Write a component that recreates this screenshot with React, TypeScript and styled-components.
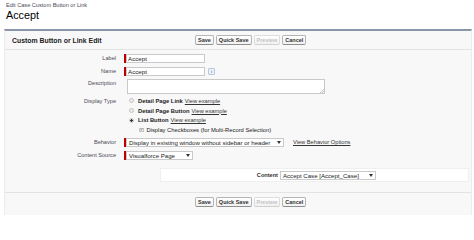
import React from 'react'
import styled, { createGlobalStyle } from 'styled-components'

const GlobalStyle = createGlobalStyle`
  html, body {
    margin: 0;
    padding: 0;
    background: #ffffff;
  }
  body {
    font-family: "Liberation Sans", Arial, sans-serif;
    color: #333333;
  }
`

const Page = styled.div`
  width: 474px;
  height: 215px;
  padding: 2px 2px 0 4px;
  box-sizing: border-box;
  overflow: hidden;
`

const Breadcrumb = styled.div`
  margin-left: 2px;
  font-size: 5.6px;
  line-height: 7px;
  color: #4a4a56;
`

const Title = styled.h1`
  margin: 0 0 0 2px;
  font-size: 10.8px;
  line-height: 13px;
  font-weight: normal;
  color: #000000;
`

const Panel = styled.div`
  margin-top: 7px;
  width: 468px;
  background: #f8f8f8;
  border-top: 2px solid #8c96aa;
  border-left: 1px solid #ececec;
  border-right: 1px solid #ececec;
  border-bottom: 1px solid #ececec;
  box-sizing: border-box;
  padding-bottom: 4px;
`

const ButtonRow = styled.div<{ $top?: boolean }>`
  display: flex;
  align-items: center;
  height: 18px;
  padding-left: 7px;
  border-${({ $top }) => ($top ? 'bottom' : 'top')}: 1px solid #e3e3e3;
`

const PanelTitle = styled.h2`
  margin: 0;
  width: 183px;
  font-size: 6.9px;
  font-weight: bold;
  color: #222222;
`

const ButtonBar = styled.div`
  display: flex;
  gap: 2px;
`

const Btn = styled.button<{ $disabled?: boolean }>`
  height: 10px;
  padding: 0 2px;
  margin: 0;
  font-family: "Liberation Sans", Arial, sans-serif;
  font-size: 5.5px;
  line-height: 8px;
  font-weight: bold;
  color: ${({ $disabled }) => ($disabled ? '#c4c4c4' : '#333333')};
  background: linear-gradient(#ffffff, #f1f1f1);
  border: 1px solid ${({ $disabled }) => ($disabled ? '#dcdcdc' : '#b5b5b5')};
  border-bottom-color: ${({ $disabled }) => ($disabled ? '#d0d0d0' : '#8f8f8f')};
  border-radius: 2px;
`

const Form = styled.div`
  display: grid;
  grid-template-columns: 113px 1fr;
  column-gap: 6px;
  padding-top: 4px;
`

const Label = styled.div<{ $top?: number }>`
  text-align: right;
  padding-right: 2px;
  padding-top: ${({ $top }) => $top ?? 0}px;
  font-size: 5.6px;
  line-height: 9px;
  color: #4a4a56;
`

const Field = styled.div<{ $gap?: number }>`
  display: flex;
  align-items: center;
  margin-bottom: ${({ $gap }) => $gap ?? 4}px;
`

const Required = styled.span`
  width: 2px;
  align-self: stretch;
  background: #c00000;
`

const TextInput = styled.div<{ $w: number }>`
  width: ${({ $w }) => $w}px;
  height: 9px;
  box-sizing: border-box;
  border: 1px solid #c9c9c9;
  background: #ffffff;
  padding-left: 1px;
  font-size: 6.2px;
  line-height: 7px;
  color: #222222;
`

const InfoIcon = styled.span`
  margin-left: 3px;
  width: 5px;
  height: 5px;
  border: 1px solid #b8c8dc;
  border-radius: 1px;
  background: #eef3fa;
  color: #5b7fb0;
  font-size: 4px;
  line-height: 5px;
  text-align: center;
  font-weight: bold;
`

const TextArea = styled.div`
  position: relative;
  margin-left: 3px;
  width: 198px;
  height: 15px;
  box-sizing: border-box;
  border: 1px solid #c9c9c9;
  background: #ffffff;
`

const Grip = styled.svg`
  position: absolute;
  right: 0;
  bottom: 0;
`

const Options = styled.div`
  display: flex;
  flex-direction: column;
  padding-left: 5px;
  margin-bottom: 3px;
`

const Option = styled.div<{ $indent?: number }>`
  display: flex;
  align-items: center;
  height: 9.7px;
  padding-left: ${({ $indent }) => $indent ?? 0}px;
  font-size: 5.8px;
  color: #222222;
`

const Radio = styled.span<{ $on?: boolean }>`
  width: 5px;
  height: 5px;
  box-sizing: border-box;
  border-radius: 50%;
  border: 1px solid #c3c3c3;
  background: ${({ $on }) => ($on ? 'radial-gradient(circle, #333 0 1px, #f2f2f2 1.3px)' : '#ececec')};
  margin-right: 4px;
`

const Check = styled.span`
  display: flex;
  align-items: center;
  justify-content: center;
  width: 4.5px;
  height: 4.5px;
  box-sizing: border-box;
  border: 1px solid #c3c3c3;
  background: #f4f4f4;
  margin-right: 3px;
`

const OptName = styled.b`
  margin-right: 2px;
`

const Link = styled.a`
  color: #333333;
  text-decoration: underline;
  font-size: 5.7px;
  font-weight: normal;
`

const Select = styled.div<{ $w: number }>`
  display: flex;
  align-items: center;
  justify-content: space-between;
  width: ${({ $w }) => $w}px;
  height: 9px;
  box-sizing: border-box;
  border: 1px solid #c9c9c9;
  background: #ffffff;
  padding: 0 2px 0 2px;
  font-size: 6.1px;
  line-height: 7px;
  color: #222222;
  white-space: nowrap;
`

const SideLink = styled(Link)`
  margin-left: 9px;
`

const ContentBox = styled.div`
  display: grid;
  grid-template-columns: 117px auto;
  column-gap: 2px;
  align-items: center;
  margin: 8px 2px 10px 155px;
  height: 14px;
  padding-top: 1px;
  box-sizing: border-box;
  background: #ffffff;
  border: 1px solid #efefef;
`

const ContentLabel = styled.div`
  text-align: right;
  font-size: 5.6px;
  font-weight: bold;
  color: #333333;
`

const Arrow = () => (
  <svg width="4" height="3" viewBox="0 0 4 3">
    <path d="M0 0 L4 0 L2 3 Z" fill="#333" />
  </svg>
)

const Buttons = () => (
  <ButtonBar>
    <Btn>Save</Btn>
    <Btn>Quick Save</Btn>
    <Btn $disabled>Preview</Btn>
    <Btn>Cancel</Btn>
  </ButtonBar>
)

export default function App() {
  return (
    <Page>
      <GlobalStyle />
      <Breadcrumb>Edit Case Custom Button or Link</Breadcrumb>
      <Title>Accept</Title>
      <Panel>
        <ButtonRow $top>
          <PanelTitle>Custom Button or Link Edit</PanelTitle>
          <Buttons />
        </ButtonRow>

        <Form>
          <Label>Label</Label>
          <Field>
            <Required />
            <TextInput $w={79}>Accept</TextInput>
          </Field>

          <Label>Name</Label>
          <Field $gap={3}>
            <Required />
            <TextInput $w={79}>Accept</TextInput>
            <InfoIcon>i</InfoIcon>
          </Field>

          <Label>Description</Label>
          <Field $gap={2}>
            <TextArea>
              <Grip width="4" height="4" viewBox="0 0 4 4">
                <path d="M0 4 L4 0 M2 4 L4 2" stroke="#999" strokeWidth="0.6" />
              </Grip>
            </TextArea>
          </Field>

          <Label $top={1}>Display Type</Label>
          <Options>
            <Option>
              <Radio />
              <OptName>Detail Page Link</OptName>
              <Link>View example</Link>
            </Option>
            <Option>
              <Radio />
              <OptName>Detail Page Button</OptName>
              <Link>View example</Link>
            </Option>
            <Option>
              <Radio $on />
              <OptName>List Button</OptName>
              <Link>View example</Link>
            </Option>
            <Option $indent={10}>
              <Check>
                <svg width="3" height="3" viewBox="0 0 3 3">
                  <path d="M0.3 1.6 L1.2 2.5 L2.8 0.4" stroke="#333" strokeWidth="0.6" fill="none" />
                </svg>
              </Check>
              Display Checkboxes (for Multi-Record Selection)
            </Option>
          </Options>

          <Label>Behavior</Label>
          <Field>
            <Required />
            <Select $w={158}>
              Display in existing window without sidebar or header
              <Arrow />
            </Select>
            <SideLink>View Behavior Options</SideLink>
          </Field>

          <Label>Content Source</Label>
          <Field $gap={0}>
            <Required />
            <Select $w={67}>
              Visualforce Page
              <Arrow />
            </Select>
          </Field>
        </Form>

        <ContentBox>
          <ContentLabel>Content</ContentLabel>
          <Select $w={96}>
            Accept Case [Accept_Case]
            <Arrow />
          </Select>
        </ContentBox>

        <ButtonRow>
          <PanelTitle />
          <Buttons />
        </ButtonRow>
      </Panel>
    </Page>
  )
}
